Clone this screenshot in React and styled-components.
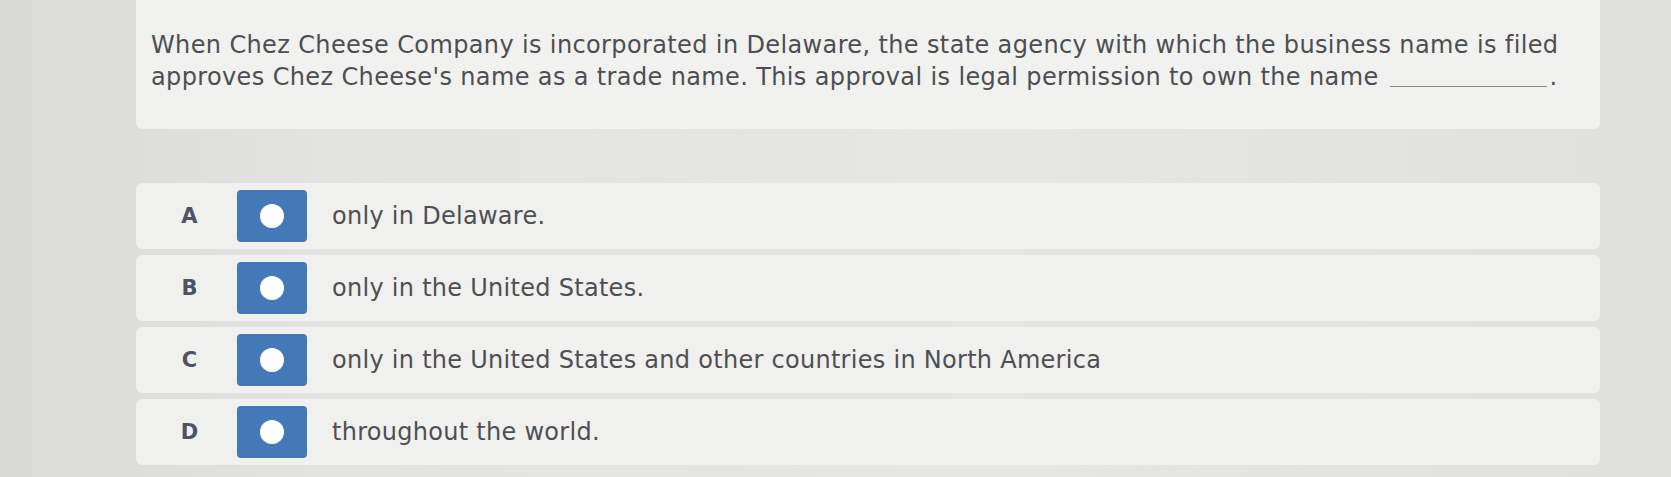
import React from 'react'
import styled, { createGlobalStyle } from 'styled-components'

const GlobalStyle = createGlobalStyle`
  html, body {
    margin: 0;
    padding: 0;
  }
  body {
    width: 1671px;
    height: 477px;
    overflow: hidden;
    background: linear-gradient(90deg, #dadad9 0%, #e3e3e2 20%, #e6e6e5 60%, #e0e0df 100%);
    font-family: "DejaVu Sans", Verdana, sans-serif;
  }
`

const Page = styled.div`
  width: 1464px;
  margin-left: 136px;
  display: flex;
  flex-direction: column;
`

const QuestionCard = styled.div`
  height: 129px;
  box-sizing: border-box;
  padding: 29px 12px 0 15px;
  background: #f1f1f0;
  border-radius: 0 0 6px 6px;
`

const QuestionText = styled.p`
  margin: 0;
  font-size: 24px;
  line-height: 32px;
  color: #4d4e51;
  letter-spacing: 0.37px;
`

const Blank = styled.span`
  display: inline-block;
  width: 157px;
  height: 0;
  margin-left: 11px;
  margin-right: 3px;
  border-bottom: 1.5px solid #85868a;
  vertical-align: -2px;
`

const Options = styled.div`
  margin-top: 54px;
  display: flex;
  flex-direction: column;
  gap: 6px;
`

const OptionRow = styled.div`
  height: 66px;
  display: flex;
  align-items: center;
  background: #f0f0ef;
  border-radius: 6px;
`

const Letter = styled.span`
  width: 101px;
  text-align: center;
  padding-left: 6px;
  box-sizing: border-box;
  font-size: 21px;
  font-weight: bold;
  color: #4c5363;
`

const RadioButton = styled.div`
  width: 70px;
  height: 52px;
  flex-shrink: 0;
  border-radius: 4px;
  background: #4479b8;
  display: flex;
  align-items: center;
  justify-content: center;

  &::after {
    content: '';
    width: 24px;
    height: 24px;
    border-radius: 50%;
    background: #ffffff;
  }
`

const OptionText = styled.span`
  margin-left: 25px;
  font-size: 24px;
  color: #4e4f52;
  letter-spacing: 0.28px;
`

const options = [
  { letter: 'A', text: 'only in Delaware.' },
  { letter: 'B', text: 'only in the United States.' },
  { letter: 'C', text: 'only in the United States and other countries in North America' },
  { letter: 'D', text: 'throughout the world.' },
]

export default function App() {
  return (
    <>
      <GlobalStyle />
      <Page>
        <QuestionCard>
          <QuestionText>
            When Chez Cheese Company is incorporated in Delaware, the state agency with which the business name is filed approves Chez Cheese's name as a trade name. This approval is legal permission to own the name
            <Blank />.
          </QuestionText>
        </QuestionCard>
        <Options>
          {options.map((o) => (
            <OptionRow key={o.letter}>
              <Letter>{o.letter}</Letter>
              <RadioButton />
              <OptionText>{o.text}</OptionText>
            </OptionRow>
          ))}
        </Options>
      </Page>
    </>
  )
}
